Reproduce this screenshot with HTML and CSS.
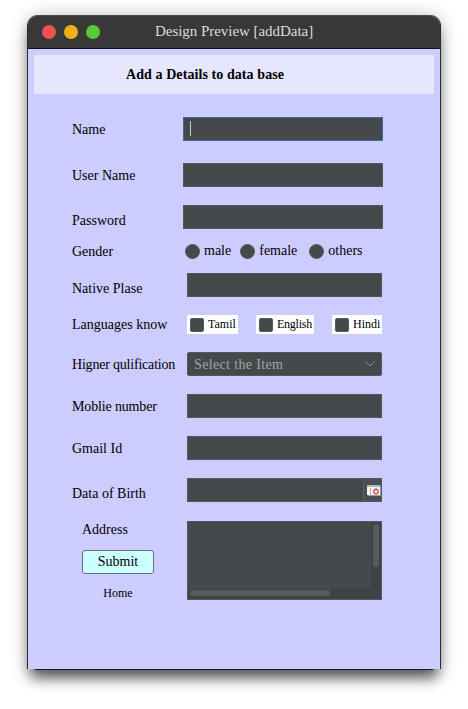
FILE: index.html
```html
<!DOCTYPE html>
<html lang="en">
<head>
    <meta charset="UTF-8">
    <meta name="viewport" content="width=device-width, initial-scale=1.0">
    <title>Design Preview [addData]</title>
    <link rel="stylesheet" href="styles.css">
</head>
<body>

    <div class="window">
        <div class="title-bar">
            <span class="dot dot-red"></span>
            <span class="dot dot-yellow"></span>
            <span class="dot dot-green"></span>
            <span class="title-text">Design Preview [addData]</span>
        </div>

        <div class="content">
            <h2 class="heading">Add a Details to data base</h2>

            <form class="form">
                <div class="row row-first">
                    <label class="label label-short">Name</label>
                    <div class="focus-wrap">
                        <input class="field field-short field-focus" type="text">
                        <span class="caret"></span>
                    </div>
                </div>
                <div class="row row-user">
                    <label class="label label-short">User Name</label>
                    <input class="field field-short" type="text">
                </div>
                <div class="row">
                    <label class="label label-short label-low">Password</label>
                    <input class="field field-short" type="password">
                </div>
                <div class="row row-gender">
                    <label class="label label-gender">Gender</label>
                    <label class="radio-item radio-male"><input class="radio" type="radio" name="gender">male</label>
                    <label class="radio-item radio-female"><input class="radio" type="radio" name="gender">female</label>
                    <label class="radio-item"><input class="radio" type="radio" name="gender">others</label>
                </div>
                <div class="row row-native">
                    <label class="label label-low">Native Plase</label>
                    <input class="field" type="text">
                </div>
                <div class="row">
                    <label class="label label-flat">Languages know</label>
                    <label class="check-item check-tamil"><input class="check" type="checkbox">Tamil</label>
                    <label class="check-item check-english"><input class="check" type="checkbox">English</label>
                    <label class="check-item check-hindi"><input class="check" type="checkbox">Hindi</label>
                </div>
                <div class="row">
                    <label class="label label-tight">Higner qulification</label>
                    <div class="select-box">
                        <span class="select-text">Select the Item</span>
                        <svg class="chevron" width="10" height="6" viewBox="0 0 10 6">
                            <path d="M0.5 0.5 L5 5 L9.5 0.5" fill="none" stroke="#8d9194" stroke-width="1"/>
                        </svg>
                    </div>
                </div>
                <div class="row">
                    <label class="label label-tight-small">Moblie number</label>
                    <input class="field" type="text">
                </div>
                <div class="row">
                    <label class="label">Gmail Id</label>
                    <input class="field" type="text">
                </div>
                <div class="row">
                    <label class="label label-low">Data of Birth</label>
                    <div class="date-box">
                        <input class="date-input" type="text">
                        <button class="date-button" type="button">
                            <svg width="14" height="11" viewBox="0 0 14 11">
                                <rect x="0" y="0" width="13" height="10" fill="#f4f4f4"/>
                                <rect x="0" y="0" width="5" height="2" fill="#f0b840"/>
                                <rect x="5" y="0" width="8" height="2" fill="#8fbce8"/>
                                <rect x="3" y="3" width="1" height="7" fill="#b8b8b8"/>
                                <circle cx="9" cy="6.5" r="2.2" fill="none" stroke="#e05050" stroke-width="1.4"/>
                                <path d="M13 1 V10 H1 V11 H14 V1 Z" fill="#9a9a9a"/>
                            </svg>
                        </button>
                    </div>
                </div>
                <div class="row row-bottom">
                    <div class="side">
                        <label class="address-label">Address</label>
                        <button class="submit" type="button">Submit</button>
                        <a class="home">Home</a>
                    </div>
                    <div class="text-area">
                        <div class="area-body"></div>
                        <div class="track-v"><div class="thumb-v"></div></div>
                        <div class="track-h"><div class="thumb-h"></div></div>
                        <div class="track-corner"></div>
                    </div>
                </div>
            </form>
        </div>
    </div>

</body>
</html>
```

FILE: styles.css
```css
html, body {
    margin: 0;
    padding: 0;
    background-color: #ffffff;
}

body {
    height: 709px;
    overflow: hidden;
    font-family: "Liberation Serif", serif;
    font-size: 14px;
    color: #000000;
}

.window {
    width: 412px;
    height: 654px;
    margin: 15px 0 0 28px;
    display: flex;
    flex-direction: column;
    border-radius: 11px 11px 0 0;
    box-shadow: -1px 0 0 #2a2a2a, 1px 0 0 #2a2a2a, 0 8px 0 -7px #1c1c2c, 0 12px 14px -3px rgba(0, 0, 0, 0.6), 0 2px 18px rgba(0, 0, 0, 0.3);
}

.title-bar {
    height: 32px;
    flex: none;
    display: flex;
    align-items: center;
    padding-left: 14px;
    background-color: #383838;
    border-top: 1px solid #4c4c4c;
    border-bottom: 1px solid #111111;
    border-radius: 11px 11px 0 0;
}

.dot {
    width: 14px;
    height: 14px;
    border-radius: 50%;
    margin-right: 8px;
}

.dot-red { background-color: #ee5350; }
.dot-yellow { background-color: #f3ae1b; }
.dot-green { background-color: #57c83a; }

.title-text {
    margin-left: 47px;
    padding-bottom: 2px;
    font-size: 15px;
    letter-spacing: -0.04px;
    color: #dcdcdc;
}

.content {
    flex: 1;
    background-color: #ccccff;
    padding: 6px 6px 0;
}

.heading {
    margin: 0;
    height: 39px;
    line-height: 39px;
    padding-left: 92px;
    font-size: 14px;
    font-weight: bold;
    letter-spacing: 0.08px;
    background-color: #e6e6ff;
}

.form {
    padding: 23px 0 0 38px;
}

.row {
    display: flex;
    align-items: center;
    margin-top: 18px;
}

.row-first { margin-top: 0; }
.row-user { margin-top: 22px; }
.row-gender { margin-top: 12px; height: 20px; }
.row-native { margin-top: 12px; }

.label {
    width: 115px;
    flex: none;
    padding-top: 2px;
}

.label-short { width: 111px; }
.label-gender { width: 113px; }
.label-low { padding-top: 8px; }
.label-flat { padding-top: 0; }
.label-tight { letter-spacing: -0.2px; }
.label-tight-small { letter-spacing: -0.15px; }

.field {
    width: 195px;
    height: 24px;
    box-sizing: border-box;
    margin: 0;
    padding: 0 6px;
    background-color: #45494c;
    border: 1px solid #54585b;
    outline: none;
    color: #dddddd;
}

.field-short { width: 200px; }
.field-focus { border-color: #3c6a9c; }

.focus-wrap {
    position: relative;
    height: 24px;
}

.caret {
    position: absolute;
    left: 7px;
    top: 4px;
    width: 1px;
    height: 15px;
    background-color: #c8c8c8;
}

.radio-item {
    display: flex;
    align-items: center;
}

.radio-male { margin-right: 9px; }
.radio-female { margin-right: 12px; }

.radio {
    appearance: none;
    width: 15px;
    height: 15px;
    margin: 0 4px 0 0;
    border-radius: 50%;
    background-color: #45494c;
    border: 1px solid #56595c;
}

.check-item {
    display: flex;
    align-items: center;
    height: 19px;
    background-color: #ffffff;
    font-size: 12px;
}

.check-tamil { width: 51px; margin-right: 18px; }
.check-english { width: 58px; margin-right: 18px; letter-spacing: -0.25px; }
.check-hindi { width: 50px; }

.check {
    appearance: none;
    width: 14px;
    height: 14px;
    margin: 0 4px 0 3px;
    border-radius: 2px;
    background-color: #45494c;
    border: 1px solid #56595c;
}

.select-box {
    width: 195px;
    height: 24px;
    box-sizing: border-box;
    display: flex;
    align-items: center;
    justify-content: space-between;
    padding: 0 6px;
    background-color: #45494c;
    border: 1px solid #54585b;
    border-radius: 2px;
}

.select-text {
    padding-top: 2px;
    color: #a3a5a7;
    letter-spacing: 0.35px;
}

.date-box {
    width: 195px;
    height: 24px;
    display: flex;
    box-sizing: border-box;
    background-color: #45494c;
    border: 1px solid #54585b;
}

.date-input {
    flex: 1;
    min-width: 0;
    padding: 0;
    background: none;
    border: none;
    outline: none;
}

.date-button {
    width: 18px;
    padding: 0 0 0 2px;
    display: flex;
    align-items: center;
    justify-content: center;
    background-color: #4b4f52;
    border: none;
    border-left: 1px solid #5b5f62;
}

.row-bottom {
    margin-top: 19px;
    align-items: flex-start;
}

.side {
    width: 115px;
    padding-left: 10px;
    box-sizing: border-box;
    flex: none;
    display: flex;
    flex-direction: column;
}

.address-label {
    height: 16px;
    line-height: 16px;
    padding-top: 1px;
}

.submit {
    width: 72px;
    height: 24px;
    margin-top: 12px;
    padding: 0;
    font-family: inherit;
    font-size: 14px;
    background-color: #ccffff;
    border: 1px solid #6b7078;
    border-radius: 3px;
    color: #000000;
}

.home {
    width: 72px;
    margin-top: 12px;
    text-align: center;
    font-size: 12px;
}

.text-area {
    width: 195px;
    height: 79px;
    box-sizing: border-box;
    display: grid;
    grid-template-columns: 1fr 10px;
    grid-template-rows: 1fr 10px;
    background-color: #45494c;
    border: 1px solid #54585b;
}

.track-v {
    background-color: #3f4244;
    padding: 2px 2px 0;
}

.thumb-v {
    width: 6px;
    height: 43px;
    border-radius: 3px;
    background-color: #565a5d;
}

.track-h {
    background-color: #3f4244;
    padding: 1px 2px;
}

.thumb-h {
    width: 140px;
    height: 6px;
    border-radius: 3px;
    background-color: #565a5d;
}

.track-corner {
    background-color: #3f4244;
}
```
